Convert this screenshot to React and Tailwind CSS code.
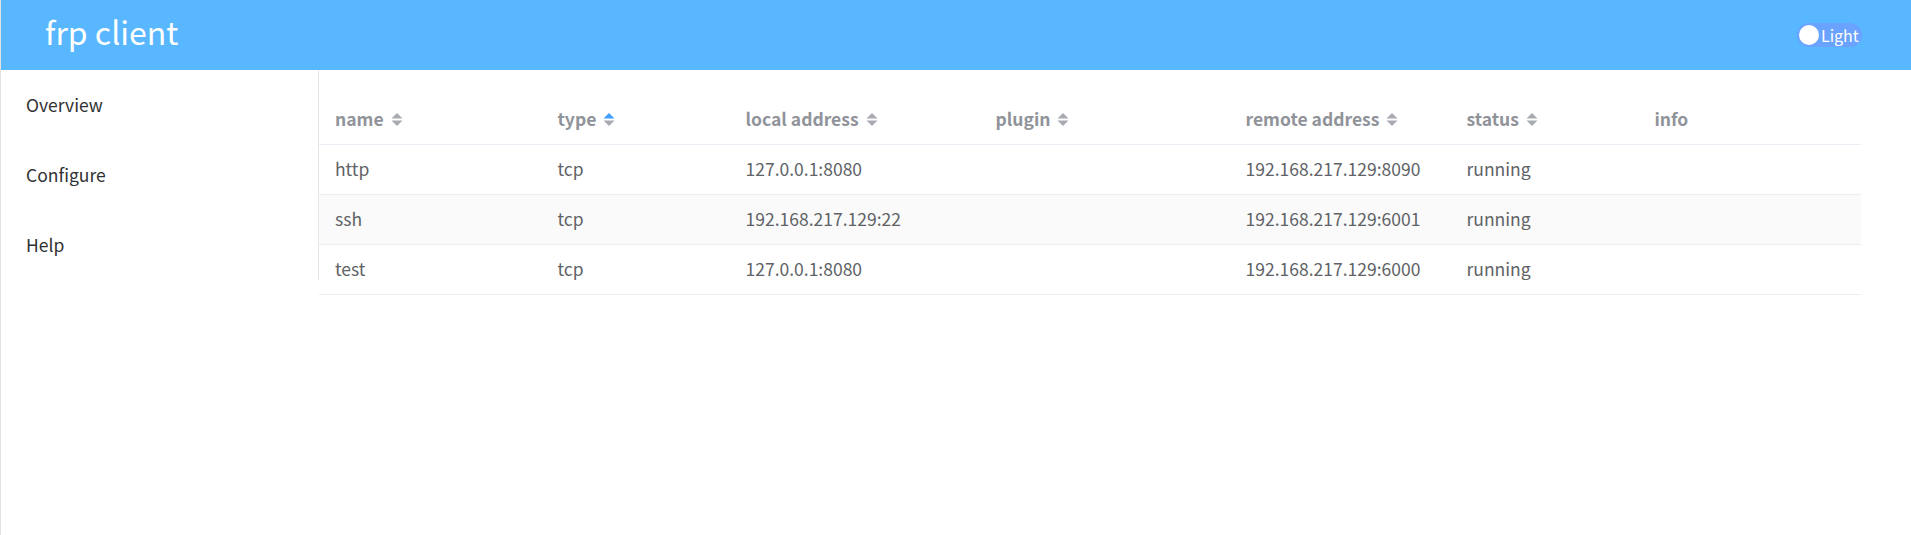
import React from 'react';

const columns = [
  { key: 'name', label: 'name', sortable: true },
  { key: 'type', label: 'type', sortable: true, active: 'asc' },
  { key: 'local', label: 'local address', sortable: true },
  { key: 'plugin', label: 'plugin', sortable: true },
  { key: 'remote', label: 'remote address', sortable: true },
  { key: 'status', label: 'status', sortable: true },
  { key: 'info', label: 'info', sortable: false },
];

const proxies = [
  { name: 'http', type: 'tcp', local: '127.0.0.1:8080', plugin: '', remote: '192.168.217.129:8090', status: 'running', info: '' },
  { name: 'ssh', type: 'tcp', local: '192.168.217.129:22', plugin: '', remote: '192.168.217.129:6001', status: 'running', info: '' },
  { name: 'test', type: 'tcp', local: '127.0.0.1:8080', plugin: '', remote: '192.168.217.129:6000', status: 'running', info: '' },
];

const menu = ['Overview', 'Configure', 'Help'];

const SortCaret = ({ active }) => (
  <svg width="12" height="15" viewBox="0 0 12 15" className="ml-[7px] shrink-0">
    <polygon points="0.5,6.5 6,1 11.5,6.5" fill={active === 'asc' ? '#409eff' : '#a8abb2'} />
    <polygon points="0.5,8.5 11.5,8.5 6,14" fill={active === 'desc' ? '#409eff' : '#a8abb2'} />
  </svg>
);

const ThemeSwitch = () => (
  <button className="flex items-center h-[24px] w-[65px] rounded-full bg-[#6aa2ff] pl-[2px]">
    <span className="w-[20px] h-[20px] rounded-full bg-white" />
    <span className="ml-[2px] text-white text-[16px] leading-none">Light</span>
  </button>
);

const App = () => {
  const grid = 'grid grid-cols-[226px_188px_250px_250px_221px_188px_1fr]';

  return (
    <div
      className="min-h-[535px] bg-white border-l border-[#e2e2e2] flex flex-col"
      style={{ fontFamily: '"Noto Sans CJK SC", "Noto Sans", sans-serif' }}
    >
      {/* Header */}
      <header className="h-[70px] bg-[#58b7ff] flex items-center justify-between pl-[44px] pr-[49px]">
        <h1 className="text-white text-[32px] leading-none pb-[9px]">frp client</h1>
        <ThemeSwitch />
      </header>

      <div className="flex flex-1">
        {/* Sidebar */}
        <aside className="w-[318px] shrink-0 self-start border-r border-[#e6e6e6]">
          {menu.map((item) => (
            <div key={item} className="h-[70px] flex items-center pl-[25px] text-[17.5px] text-[#303133]">
              {item}
            </div>
          ))}
        </aside>

        {/* Proxy table */}
        <main className="flex-1 pt-[25px] pr-[50px]">
          <div className={`${grid} h-[50px] border-b border-[#ebeef5] items-center`}>
            {columns.map((col, i) => (
              <div
                key={col.key}
                className={`flex items-center font-bold text-[17.5px] text-[#909399] ${i === 0 ? 'pl-[16px]' : 'pl-[12.5px]'}`}
              >
                {col.label}
                {col.sortable && <SortCaret active={col.active} />}
              </div>
            ))}
          </div>
          {proxies.map((p, r) => (
            <div
              key={p.name}
              className={`${grid} h-[50px] border-b border-[#ebeef5] items-center ${r % 2 === 1 ? 'bg-[#fafafa]' : 'bg-white'}`}
            >
              {columns.map((col, i) => (
                <div
                  key={col.key}
                  className={`text-[17.5px] text-[#606266] ${i === 0 ? 'pl-[16px]' : 'pl-[12.5px]'}`}
                >
                  {p[col.key]}
                </div>
              ))}
            </div>
          ))}
        </main>
      </div>
    </div>
  );
};

export default App;
